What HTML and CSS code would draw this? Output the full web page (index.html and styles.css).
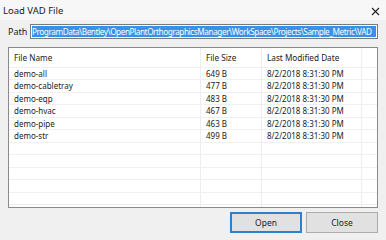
FILE: index.html
```html
<!DOCTYPE html>
<html lang="en">
<head>
  <meta charset="UTF-8" />
  <title>Load VAD File</title>
  <link rel="stylesheet" href="styles.css">
</head>
<body>
  <div class="dialog">
    <div class="titlebar">
      <span class="title">Load VAD File</span>
      <svg class="close-x" width="9" height="9" viewBox="0 0 9 9"><path d="M1 1 L8 8 M8 1 L1 8" stroke="#222" stroke-width="1.1"/></svg>
    </div>

    <div class="path-row">
      <span class="path-label">Path</span>
      <div class="path-box"><span class="path-sel">ProgramData\Bentley\OpenPlantOrthographicsManager\WorkSpace\Projects\Sample_Metric\VAD</span></div>
    </div>

    <div class="file-list">
      <div class="row head">
        <div class="cell">File Name</div>
        <div class="cell">File Size</div>
        <div class="cell">Last Modified Date</div>
        <div class="cell"></div>
      </div>
      <div id="rows"></div>
    </div>

    <div class="buttons">
      <button class="btn primary">Open</button>
      <button class="btn">Close</button>
    </div>
  </div>

  <script>
    const files = [
      ['demo-all', '649 B'],
      ['demo-cabletray', '477 B'],
      ['demo-eqp', '483 B'],
      ['demo-hvac', '467 B'],
      ['demo-pipe', '463 B'],
      ['demo-str', '499 B']
    ];
    const rows = document.getElementById('rows');
    let html = '';
    for (let i = 0; i < 12; i++) {
      const f = files[i];
      html += '<div class="row">'
        + '<div class="cell">' + (f ? f[0] : '') + '</div>'
        + '<div class="cell">' + (f ? f[1] : '') + '</div>'
        + '<div class="cell">' + (f ? '8/2/2018 8:31:30 PM' : '') + '</div>'
        + '<div class="cell"></div></div>';
    }
    rows.innerHTML = html;
  </script>
</body>
</html>
```

FILE: styles.css
```css
body {
  margin: 0;
  font-family: "Noto Sans", "Open Sans", sans-serif;
  color: #1a1a1a;
}
.dialog {
  width: 386px;
  height: 240px;
  background: #f0f0f0;
  overflow: hidden;
}
.titlebar {
  height: 20px;
  background: #f7f7f7;
  display: flex;
  align-items: center;
  justify-content: space-between;
  padding: 0 6px 0 3px;
  font-size: 9.5px;
}
.close-x {
  margin-top: 2px;
}
.path-row {
  display: flex;
  align-items: center;
  padding: 5px 8px 0 8px;
  height: 13px;
}
.path-label {
  width: 22px;
  font-size: 9px;
}
.path-box {
  flex: 1;
  height: 11px;
  border: 1px solid #7a7a7a;
  background: #fff;
  padding: 1px;
  display: flex;
  overflow: hidden;
}
.path-sel {
  flex: 1;
  background: #3592ec;
  color: #fff;
  font-size: 8.2px;
  line-height: 11px;
  letter-spacing: -0.42px;
  white-space: nowrap;
}
.file-list {
  margin: 9px 8px 0 8px;
  height: 159px;
  border: 1px solid #8a8a8a;
  background: #fff;
  overflow: hidden;
}
.row {
  display: grid;
  grid-template-columns: 192px 61px 100px 1fr;
  height: 12.5px;
  border-bottom: 1px solid #f0f0f0;
  box-sizing: border-box;
  font-size: 8px;
  line-height: 12px;
}
.row.head {
  height: 19.7px;
  line-height: 19px;
  font-size: 8.2px;
}
.cell {
  border-right: 1px solid #eeeeee;
  padding-left: 5px;
  white-space: nowrap;
  overflow: hidden;
}
.cell:last-child {
  border-right: none;
}
.buttons {
  display: flex;
  justify-content: flex-end;
  gap: 4px;
  padding: 4px 8px 0 0;
}
.btn {
  width: 72px;
  height: 21px;
  background: #e1e1e1;
  border: 1px solid #adadad;
  font-family: "Noto Sans", "Open Sans", sans-serif;
  font-size: 8.5px;
  color: #1a1a1a;
  padding: 0;
}
.btn.primary {
  border: 2px solid #2d7fd0;
}
```
